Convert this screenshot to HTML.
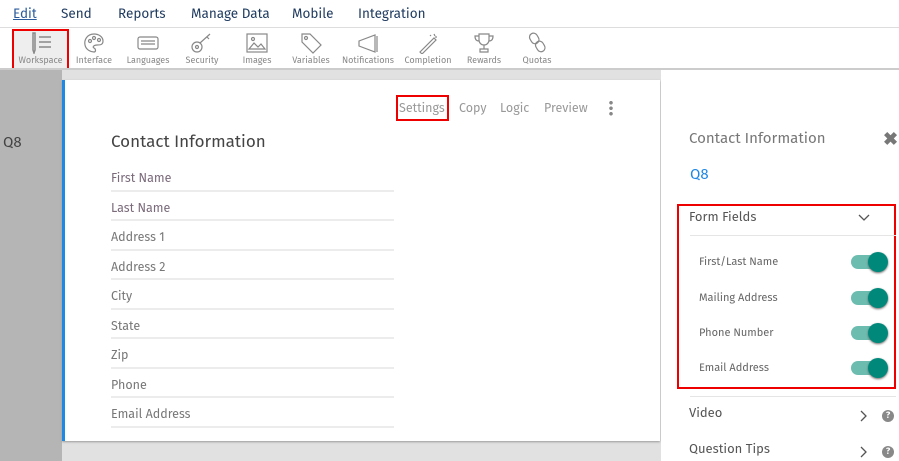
<!DOCTYPE html>
<html><head><meta charset="utf-8"><style>
*{margin:0;padding:0;box-sizing:border-box}
body{width:899px;height:461px;overflow:hidden;font-family:"Fira Sans","Liberation Sans",sans-serif;background:#fff;position:relative}
.nav{position:absolute;top:0;left:0;width:899px;height:28px;border-bottom:1px solid #ddd;background:#fff}
.nav span{position:absolute;top:5px;font-size:13.5px;color:#1e3a5f}
.tb{position:absolute;top:28px;left:0;width:899px;height:42px;background:#fff}
.ti{position:absolute;top:0;height:42px;text-align:center;font-size:9px;color:#888}
.ti svg{display:block;margin:3px auto 0}
.ti div{position:absolute;top:27px;left:-6px;right:-6px}
.sel{position:absolute;left:12px;top:29px;width:57px;height:41px;border:2px solid #e00;background:#eee}
.left{position:absolute;left:0;top:70px;width:62px;height:391px;background:#b5b5b5}
.gray{position:absolute;left:62px;top:70px;width:599px;height:391px;background:#e1e1e1}
.card{position:absolute;left:62px;top:80px;width:598px;height:361px;background:#fff;border-left:3px solid #1e88e5;box-shadow:0 1px 2px #999}
.panel{position:absolute;left:661px;top:70px;width:238px;height:391px;background:#fff}
.f{position:absolute;left:46px;width:283px;height:29.5px;border-bottom:2px solid #ececec;font-size:12.5px;color:#777;padding-top:9px}
.tg{position:absolute;left:190px;width:36px;height:14px;border-radius:7px;background:#6dbcb0}
.tg:after{content:"";position:absolute;right:-1px;top:-3px;width:20px;height:20px;border-radius:50%;background:#00897b;box-shadow:0 1px 2px #666}
.lb{position:absolute;left:38px;font-size:11px;color:#666}
.a{position:absolute;top:21px;font-size:12.5px;color:#999}
</style></head><body>
<div class="nav">
<span style="left:13px;text-decoration:underline;color:#2a5b9c">Edit</span>
<span style="left:61px">Send</span><span style="left:118px">Reports</span><span style="left:191px">Manage Data</span><span style="left:292px">Mobile</span><span style="left:358px">Integration</span>
</div>
<div class="tb"></div>
<div class="sel"></div>
<div style="position:absolute;top:29px;left:0">
<div class="ti" style="left:12px;width:57px"><svg width="26" height="22" stroke="#888" fill="none" stroke-width="1.5"><path d="M5 1v17l1 3 1-3V1zM11 5h12M11 10h12M11 15h12"/></svg><div>Workspace</div></div>
<div class="ti" style="left:70px;width:48px"><svg width="24" height="22" stroke="#888" fill="none" stroke-width="1.2"><path d="M12 2C5 2 2 8 3 13c1 5 6 7 9 7 2 0 2-3 0-4s0-3 3-3 6 0 6-4-4-7-9-7z"/><circle cx="8" cy="9" r="1.5"/><circle cx="12" cy="6" r="1.5"/><circle cx="17" cy="8" r="1.5"/></svg><div>Interface</div></div>
<div class="ti" style="left:122px;width:52px"><svg width="24" height="22" stroke="#888" fill="none" stroke-width="1.2"><rect x="2" y="5" width="20" height="12" rx="2"/><path d="M5 9h14M5 12h14"/></svg><div>Languages</div></div>
<div class="ti" style="left:180px;width:44px"><svg width="24" height="22" stroke="#888" fill="none" stroke-width="1.2"><circle cx="7" cy="15" r="5"/><circle cx="7" cy="15" r="1.5"/><path d="M10 11l10-9M17 5l2 2"/></svg><div>Security</div></div>
<div class="ti" style="left:235px;width:44px"><svg width="24" height="22" stroke="#888" fill="none" stroke-width="1.2"><rect x="2" y="2" width="20" height="18"/><path d="M4 17l5-6 4 4 3-3 4 5z"/><circle cx="8" cy="7" r="1.5"/></svg><div>Images</div></div>
<div class="ti" style="left:289px;width:44px"><svg width="24" height="22" stroke="#888" fill="none" stroke-width="1.2"><path d="M3 2h8l11 11-8 8L3 10z"/><circle cx="7" cy="6" r="1.5"/></svg><div>Variables</div></div>
<div class="ti" style="left:340px;width:56px"><svg width="24" height="22" stroke="#888" fill="none" stroke-width="1.2"><path d="M3 9v5l16 6V3zM21 4v16"/></svg><div>Notifications</div></div>
<div class="ti" style="left:402px;width:52px"><svg width="24" height="22" stroke="#888" fill="none" stroke-width="1.2"><path d="M4 20l14-14 2 2L6 22zM18 2l1 2M21 5l-2 0M14 3l1 1"/></svg><div>Completion</div></div>
<div class="ti" style="left:462px;width:44px"><svg width="24" height="22" stroke="#888" fill="none" stroke-width="1.2"><path d="M7 2h10v6a5 5 0 0 1-10 0zM7 4H3c0 4 2 5 4 5M17 4h4c0 4-2 5-4 5M12 13v4M8 20h8v-3H8z"/></svg><div>Rewards</div></div>
<div class="ti" style="left:515px;width:44px"><svg width="24" height="22" stroke="#888" fill="none" stroke-width="1.2"><rect x="5" y="1" width="8" height="11" rx="4" transform="rotate(-30 9 6)"/><rect x="11" y="9" width="8" height="11" rx="4" transform="rotate(-30 15 14)"/></svg><div>Quotas</div></div>
</div>
<div style="position:absolute;top:68px;left:0;width:899px;height:2px;background:#ccc"></div>
<div class="left"><div style="position:absolute;left:3px;top:63px;font-size:15px;color:#444">Q8</div></div>
<div class="gray"></div>
<div class="card">
<div style="position:absolute;left:331px;top:15px;width:53px;height:26px;border:2px solid #e00"></div>
<div class="a" style="left:334px">Settings</div>
<div class="a" style="left:394px">Copy</div>
<div class="a" style="left:435px">Logic</div>
<div class="a" style="left:479px">Preview</div>
<div style="position:absolute;left:544px;top:20px;width:4px;height:16px;background:radial-gradient(circle,#888 1.6px,transparent 2px) 0 0/4px 5.5px"></div>
<div style="position:absolute;left:46px;top:51px;font-size:17px;color:#444">Contact Information</div>
<div class="f" style="top:82px;color:#7a6a7a">First Name</div>
<div class="f" style="top:111.5px;color:#7a6a7a">Last Name</div>
<div class="f" style="top:141px">Address 1</div>
<div class="f" style="top:170.5px">Address 2</div>
<div class="f" style="top:200px">City</div>
<div class="f" style="top:229.5px">State</div>
<div class="f" style="top:259px">Zip</div>
<div class="f" style="top:288.5px">Phone</div>
<div class="f" style="top:318px">Email Address</div>
</div>
<div class="panel">
<div style="position:absolute;left:28px;top:59px;font-size:15px;color:#777">Contact Information</div>
<div style="position:absolute;left:222px;top:58px;font-size:18px;color:#777;font-weight:bold">✖</div>
<div style="position:absolute;left:29px;top:95px;font-size:15px;color:#1e88e5">Q8</div>
<div style="position:absolute;left:16px;top:134px;width:219px;height:185px;border:2px solid #e00"></div>
<div style="position:absolute;left:28px;top:140px;font-size:13px;color:#555">Form Fields</div>
<svg style="position:absolute;left:197px;top:144px" width="12" height="8" fill="none" stroke="#555" stroke-width="1.3"><path d="M1 1l5 5 5-5"/></svg>
<div style="position:absolute;left:29px;top:165px;width:206px;height:1px;background:#e5e5e5"></div>
<div class="lb" style="top:185px">First/Last Name</div><div class="tg" style="top:185px"></div>
<div class="lb" style="top:221px">Mailing Address</div><div class="tg" style="top:221px"></div>
<div class="lb" style="top:256px">Phone Number</div><div class="tg" style="top:256px"></div>
<div class="lb" style="top:291px">Email Address</div><div class="tg" style="top:291px"></div>
<div style="position:absolute;left:29px;top:326px;width:206px;height:1px;background:#e5e5e5"></div>
<div style="position:absolute;left:28px;top:336px;font-size:13px;color:#555">Video</div>
<div style="position:absolute;left:28px;top:372px;font-size:13px;color:#555">Question Tips</div>
<svg style="position:absolute;left:199px;top:340px" width="8" height="12" fill="none" stroke="#555" stroke-width="1.3"><path d="M1 1l5 5-5 5"/></svg>
<svg style="position:absolute;left:199px;top:376px" width="8" height="12" fill="none" stroke="#555" stroke-width="1.3"><path d="M1 1l5 5-5 5"/></svg>
<div style="position:absolute;left:221px;top:340px;width:12px;height:12px;border-radius:50%;background:#888;color:#fff;font-size:9px;text-align:center;font-weight:bold;line-height:12px">?</div>
<div style="position:absolute;left:221px;top:376px;width:12px;height:12px;border-radius:50%;background:#888;color:#fff;font-size:9px;text-align:center;font-weight:bold;line-height:12px">?</div>
</div>
</body></html>
